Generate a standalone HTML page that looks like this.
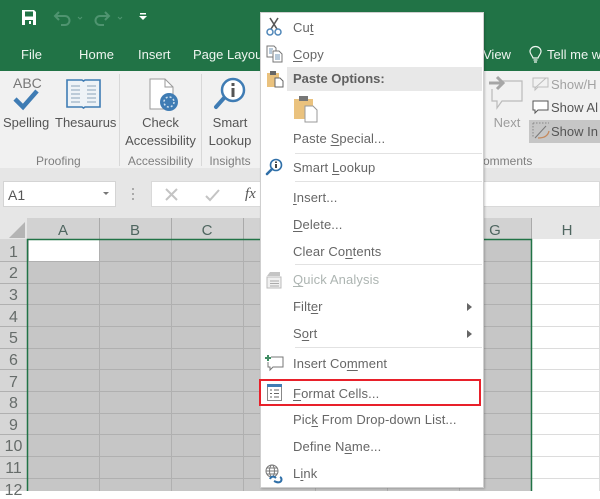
<!DOCTYPE html>
<html><head><meta charset="utf-8">
<style>
html,body{margin:0;padding:0}
body{width:600px;height:491px;overflow:hidden;position:relative;background:#fff;font-family:"Liberation Sans",sans-serif}
.a{position:absolute}
.t{position:absolute;white-space:nowrap;line-height:16px;font-size:13px;color:#5a5a5a}
.c{text-align:center}
.w{color:#eef5f0}
.g{color:#7e7e7e;font-size:12px}
.m{left:293px;color:#666;font-size:13px;letter-spacing:.12px}
.m u{text-underline-offset:2px}
.hl{position:absolute;top:218px;width:1px;height:21px;background:#aaa}
.rh{position:absolute;left:0;width:27px;text-align:center;font-size:16px;color:#666c6a;line-height:16px}
.hd{position:absolute;top:222px;font-size:15px;color:#4f6660;text-align:center;width:72px;line-height:18px}
svg{position:absolute;overflow:visible}
</style></head><body>
<!-- title bar -->
<div class="a" style="left:0;top:0;width:600px;height:71px;background:#217346"></div>
<svg style="left:21px;top:9px" width="16" height="17" viewBox="0 0 16 17"><path d="M1 1h12l2 2v13H1z" fill="#fff"/><rect x="4" y="2.500" width="8" height="5" fill="#217346"/><rect x="4" y="11" width="8" height="5" fill="#217346"/><rect x="8" y="12" width="2" height="3" fill="#fff"/></svg>
<svg style="left:52px;top:10px" width="72" height="17" viewBox="0 0 72 17" fill="none" stroke="#4f9470" stroke-width="2"><path d="M3 6h10a4.500 4.500 0 0 1 0 9H9M7 2L3 6l4 4"/><path d="M57 6H48a4.500 4.500 0 0 0 0 9h4M53 2l4 4-4 4"/><path d="M26 7l2 2 2-2M66 7l2 2 2-2" stroke-width="1"/></svg>
<svg style="left:139px;top:13px" width="8" height="8" viewBox="0 0 8 8"><rect x="1" y="0" width="6" height="1.500" fill="#fff"/><path d="M0 3h8L4 7z" fill="#fff"/></svg>
<div class="t w" style="left:21px;top:47px;font-size:13px">File</div>
<div class="t w" style="left:79px;top:47px;font-size:13px;letter-spacing:.1px">Home</div>
<div class="t w" style="left:138px;top:47px;font-size:13px">Insert</div>
<div class="t w" style="left:193px;top:47px;font-size:13px">Page Layout</div>
<div class="t w" style="left:483px;top:47px;font-size:13px">View</div>
<svg style="left:529px;top:46px" width="13" height="17" viewBox="0 0 13 17" fill="none" stroke="#eef5f0" stroke-width="1.200"><path d="M4 12C3 9 1 8 1 5.500a5.500 5 0 0 1 11 0C12 8 10 9 9 12z"/><path d="M4.500 14h4M5 16h3"/></svg>
<div class="t w" style="left:547px;top:47px;font-size:13px">Tell me w</div>

<!-- ribbon -->
<div class="a" style="left:0;top:71px;width:600px;height:97px;background:#f1f1f1"></div>
<div class="a" style="left:119px;top:74px;width:1px;height:92px;background:#d8d8d8"></div>
<div class="a" style="left:201px;top:74px;width:1px;height:92px;background:#d8d8d8"></div>
<div class="t" style="left:13px;top:75px;font-size:14px;color:#777">ABC</div>
<svg style="left:13px;top:88px" width="26" height="22" viewBox="0 0 26 22"><path d="M2 11l8 8L24 3" fill="none" stroke="#3f7cb4" stroke-width="4.500"/></svg>
<svg style="left:66px;top:78px" width="35" height="31" viewBox="0 0 35 31"><path d="M1 2h15l1.500 1L19 2h15v27H19l-1.500 1L16 29H1z" fill="#eef3f7" stroke="#3f7cb4" stroke-width="1.600"/><path d="M5 8h9M5 12h9M5 16h9M5 20h9M5 24h9M21 8h9M21 12h9M21 16h9M21 20h9M21 24h9" stroke="#8aa3b8"/></svg>
<div class="t" style="left:3px;top:115px;color:#555">Spelling</div>
<div class="t" style="left:55px;top:115px;color:#555">Thesaurus</div>
<div class="t g" style="left:36px;top:153px">Proofing</div>
<svg style="left:149px;top:78px" width="30" height="34" viewBox="0 0 30 34"><path d="M1 1h15l8 8v22H1z" fill="#fff" stroke="#9a9a9a"/><path d="M16 1v8h8" fill="none" stroke="#9a9a9a"/><circle cx="20" cy="24" r="9" fill="#3f7cb4"/><circle cx="20" cy="24" r="5" fill="none" stroke="#cfe0ee" stroke-width="1.500" stroke-dasharray="2 2"/></svg>
<div class="t c" style="left:120px;top:115px;width:81px;color:#555">Check</div>
<div class="t c" style="left:120px;top:133px;width:81px;color:#555">Accessibility</div>
<div class="t g c" style="left:120px;top:153px;width:81px">Accessibility</div>
<svg style="left:213px;top:77px" width="35" height="34" viewBox="0 0 35 34"><circle cx="20" cy="13" r="11" fill="#fff" stroke="#3f7cb4" stroke-width="2.500"/><path d="M11 21L3 30" stroke="#3f7cb4" stroke-width="4" stroke-linecap="round"/><rect x="18.500" y="11" width="3" height="9" fill="#555"/><rect x="18.500" y="6" width="3" height="3" fill="#555"/></svg>
<div class="t c" style="left:204px;top:115px;width:52px;color:#555">Smart</div>
<div class="t c" style="left:204px;top:133px;width:52px;color:#555">Lookup</div>
<div class="t g c" style="left:204px;top:153px;width:52px">Insights</div>

<!-- comments group -->
<svg style="left:488px;top:75px" width="36" height="36" viewBox="0 0 36 36" fill="none"><path d="M12 6h22v20H14l-5 7v-7H4V14" stroke="#bbb" stroke-width="1.200"/><path d="M1 8h13M9 2l6 6-6 6" stroke="#a6a6a6" stroke-width="3"/></svg>
<div class="t c" style="left:488px;top:115px;width:38px;color:#9c9c9c">Next</div>
<svg style="left:532px;top:77px" width="17" height="15" viewBox="0 0 17 15" fill="none" stroke="#bdbdbd"><path d="M1 1h15v9H6l-3 3v-3H1zM3 11L14 1"/></svg>
<div class="t" style="left:551px;top:77px;color:#a2a2a2">Show/H</div>
<svg style="left:532px;top:100px" width="17" height="15" viewBox="0 0 17 15" fill="#fff" stroke="#555"><path d="M1 1h15v9H6l-3 3v-3H1z"/></svg>
<div class="t" style="left:551px;top:100px;color:#555">Show Al</div>
<div class="a" style="left:529px;top:120px;width:71px;height:23px;background:#c6c6c6"></div>
<svg style="left:532px;top:122px" width="18" height="18" viewBox="0 0 18 18" fill="none"><path d="M1 1h16M1 1v15" stroke="#888" stroke-dasharray="1.500 1.500"/><path d="M3 16L14 4" stroke="#777"/><path d="M6 16c6 0 10-2 11-7" stroke="#c58a5e" stroke-width="1.300"/></svg>
<div class="t" style="left:551px;top:124px;color:#555">Show In</div>
<div class="t g" style="left:483px;top:153px">omments</div>

<!-- formula bar -->
<div class="a" style="left:0;top:168px;width:600px;height:50px;background:#e6e6e6"></div>
<div class="a" style="left:3px;top:181px;width:113px;height:26px;background:#fff;border:1px solid #d4d4d4;box-sizing:border-box"></div>
<div class="t" style="left:8px;top:187px;font-size:14px;color:#555">A1</div>
<div class="a" style="left:103px;top:192px;width:0;height:0;border:3px solid transparent;border-top:3px solid #777"></div>
<div class="a" style="left:132px;top:188px;width:2px;height:2px;background:#aaa;box-shadow:0 5px #aaa,0 10px #aaa"></div>
<div class="a" style="left:151px;top:181px;width:449px;height:26px;background:#fff;border:1px solid #d9d9d9;box-sizing:border-box"></div>
<svg style="left:165px;top:188px" width="62" height="14" viewBox="0 0 62 14" fill="none" stroke="#c4c4c4" stroke-width="2"><path d="M1 1l11 11M12 1L1 12M41 8l4 4 9-10"/></svg>
<div class="t" style="left:245px;top:186px;font:italic 15px 'Liberation Serif',serif;color:#555">fx</div>

<!-- sheet headers -->
<div class="a" style="left:0;top:218px;width:600px;height:21px;background:#e6e6e6"></div>
<div class="a" style="left:27px;top:218px;width:504px;height:21px;background:#d2d2d2"></div>
<svg style="left:9px;top:222px" width="17" height="16" viewBox="0 0 17 16"><path d="M16 0v16H0z" fill="#b4b4b4"/></svg>
<div class="a" style="left:0;top:239px;width:27px;height:252px;background:#d6d6d6"></div>
<div class="hl" style="left:99px"></div><div class="hl" style="left:171px"></div><div class="hl" style="left:243px"></div><div class="hl" style="left:531px"></div>
<div class="hd" style="left:27px">A</div><div class="hd" style="left:99px">B</div><div class="hd" style="left:171px">C</div><div class="hd" style="left:459px">G</div><div class="hd" style="left:531px">H</div>

<!-- cells -->
<div class="a" style="left:27px;top:240px;width:504px;height:251px;background:#c6c6c6"></div>
<div class="a" style="left:29px;top:240px;width:70px;height:21px;background:#fff"></div>
<svg style="left:0;top:0" width="600" height="491" viewBox="0 0 600 491" fill="none">
<g stroke="#b0b0b0" stroke-width="1">
<path d="M0 261.500H531M0 283.500H531M0 304.500H531M0 326.500H531M0 348.500H531M0 369.500H531M0 391.500H531M0 413.500H531M0 434.500H531M0 456.500H531M0 478.500H531"/>
<path d="M99.500 240V491M171.500 240V491M243.500 240V491M315.500 240V491M387.500 240V491M459.500 240V491"/>
</g>
<g stroke="#dcdcdc"><path d="M531 261.500H600M531 283.500H600M531 304.500H600M531 326.500H600M531 348.500H600M531 369.500H600M531 391.500H600M531 413.500H600M531 434.500H600M531 456.500H600M531 478.500H600"/><path d="M599.500 240V491"/></g>
<path d="M27.500 491V239.500H531.500V491" stroke="#217346" stroke-width="1.500"/>
</svg>
<div class="rh" style="top:245px">1</div><div class="rh" style="top:266px">2</div><div class="rh" style="top:288px">3</div><div class="rh" style="top:310px">4</div><div class="rh" style="top:331px">5</div><div class="rh" style="top:353px">6</div><div class="rh" style="top:375px">7</div><div class="rh" style="top:396px">8</div><div class="rh" style="top:418px">9</div><div class="rh" style="top:439px">10</div><div class="rh" style="top:461px">11</div><div class="rh" style="top:483px">12</div>

<!-- context menu -->
<div class="a" style="left:260px;top:12px;width:224px;height:476px;background:#fff;border:1px solid #cfcfcf;box-sizing:border-box;box-shadow:1px 1px 2px rgba(0,0,0,.2)"></div>
<div class="a" style="left:287px;top:67px;width:195px;height:24px;background:#e8e8e8"></div>
<div class="a" style="left:295px;top:153px;width:187px;height:1px;background:#e2e2e2"></div>
<div class="a" style="left:295px;top:181px;width:187px;height:1px;background:#e2e2e2"></div>
<div class="a" style="left:295px;top:264px;width:187px;height:1px;background:#e2e2e2"></div>
<div class="a" style="left:295px;top:347px;width:187px;height:1px;background:#e2e2e2"></div>

<svg style="left:265px;top:17px" width="18" height="19" viewBox="0 0 18 19" fill="none"><path d="M5 1l7 11M13 1L6 12" stroke="#555" stroke-width="1.600"/><circle cx="5" cy="15" r="3" stroke="#4f86b8" stroke-width="1.500"/><circle cx="13" cy="15" r="3" stroke="#4f86b8" stroke-width="1.500"/></svg>
<div class="t m" style="top:20px">Cu<u>t</u></div>
<svg style="left:266px;top:45px" width="17" height="18" viewBox="0 0 17 18" fill="#fff" stroke="#777"><path d="M1 1h7l2 2v9H1z"/><path d="M7 6h6l3 3v8H7z"/><path d="M9 10h5M9 12h5M9 14h5M3 4h4M3 6h3M3 8h3" stroke="#6f93b3"/></svg>
<div class="t m" style="top:47px"><u>C</u>opy</div>
<svg style="left:267px;top:70px" width="17" height="18" viewBox="0 0 17 18"><rect x="0" y="3" width="12" height="14" fill="#eac27e"/><rect x="3" y="1" width="6" height="4" fill="#666"/><path d="M8 8h5l3 3v6H8z" fill="#fff" stroke="#666"/></svg>
<div class="t" style="left:293px;top:71px;font-weight:bold;color:#606060">Paste Options:</div>
<svg style="left:294px;top:96px" width="24" height="27" viewBox="0 0 24 27"><rect x="0" y="3" width="19" height="20" fill="#eac27e"/><rect x="5" y="0" width="9" height="5" fill="#777"/><path d="M11 10h8l4 4v12H11z" fill="#fff" stroke="#999"/></svg>
<div class="t m" style="top:131px">Paste <u>S</u>pecial...</div>
<svg style="left:265px;top:158px" width="18" height="18" viewBox="0 0 18 18"><circle cx="11" cy="7" r="5.500" fill="#fff" stroke="#2f6fa8" stroke-width="1.600"/><path d="M7 11l-5 5" stroke="#2f6fa8" stroke-width="2.600" stroke-linecap="round"/><rect x="10" y="6" width="2" height="4" fill="#444"/><rect x="10" y="3.500" width="2" height="1.500" fill="#444"/></svg>
<div class="t m" style="top:160px">Smart <u>L</u>ookup</div>
<div class="t m" style="top:190px"><u>I</u>nsert...</div>
<div class="t m" style="top:217px"><u>D</u>elete...</div>
<div class="t m" style="top:244px">Clear Co<u>n</u>tents</div>
<svg style="left:266px;top:271px" width="16" height="18" viewBox="0 0 16 18"><rect x="1" y="6" width="14" height="11" fill="#f0f0f0" stroke="#bbb"/><path d="M4 1h10v4H4zM1 5l3-4 3 4z" fill="#c4c4c4"/><path d="M4 10h9M4 12.500h9M4 15h9" stroke="#aaa"/></svg>
<div class="t m" style="top:272px;color:#adb5b2"><u>Q</u>uick Analysis</div>
<div class="t m" style="top:299px">Filt<u>e</u>r</div>
<div class="t m" style="top:326px">S<u>o</u>rt</div>
<div class="a" style="left:467px;top:303px;width:0;height:0;border:4px solid transparent;border-left:5px solid #666"></div>
<div class="a" style="left:467px;top:330px;width:0;height:0;border:4px solid transparent;border-left:5px solid #666"></div>
<svg style="left:265px;top:354px" width="19" height="18" viewBox="0 0 19 18" fill="none"><path d="M6 3h12v10H8l-3 3v-3H3V8" stroke="#777"/><path d="M0 4h6M3 1v6" stroke="#3f8d63" stroke-width="2"/></svg>
<div class="t m" style="top:356px">Insert Co<u>m</u>ment</div>
<svg style="left:267px;top:384px" width="15" height="18" viewBox="0 0 15 18" fill="none"><rect x=".5" y=".5" width="14" height="16" fill="#fff" stroke="#888"/><rect x="0" y="0" width="15" height="3" fill="#3f7cb4"/><path d="M3 6h2M7 6h5M3 9.500h2M7 9.500h5M3 13h2M7 13h5" stroke="#666"/></svg>
<div class="t m" style="top:386px"><u>F</u>ormat Cells...</div>
<div class="t m" style="top:412px">Pic<u>k</u> From Drop-down List...</div>
<div class="t m" style="top:439px">Define N<u>a</u>me...</div>
<svg style="left:265px;top:464px" width="19" height="20" viewBox="0 0 19 20" fill="none"><circle cx="7" cy="7" r="6" stroke="#777"/><ellipse cx="7" cy="7" rx="2.500" ry="6" stroke="#777"/><path d="M1 7h12M2 4h10M2 10h10" stroke="#777"/><path d="M5 15c1-3 4-3 6-1M15 13c2 1 2 4 0 5-2 1-4 0-6-1" stroke="#2f6fa8" stroke-width="2"/></svg>
<div class="t m" style="top:466px">L<u>i</u>nk</div>

<!-- red highlight -->
<div class="a" style="left:259px;top:379px;width:222px;height:27px;border:2px solid #e8202a;box-sizing:border-box"></div>
</body></html>
